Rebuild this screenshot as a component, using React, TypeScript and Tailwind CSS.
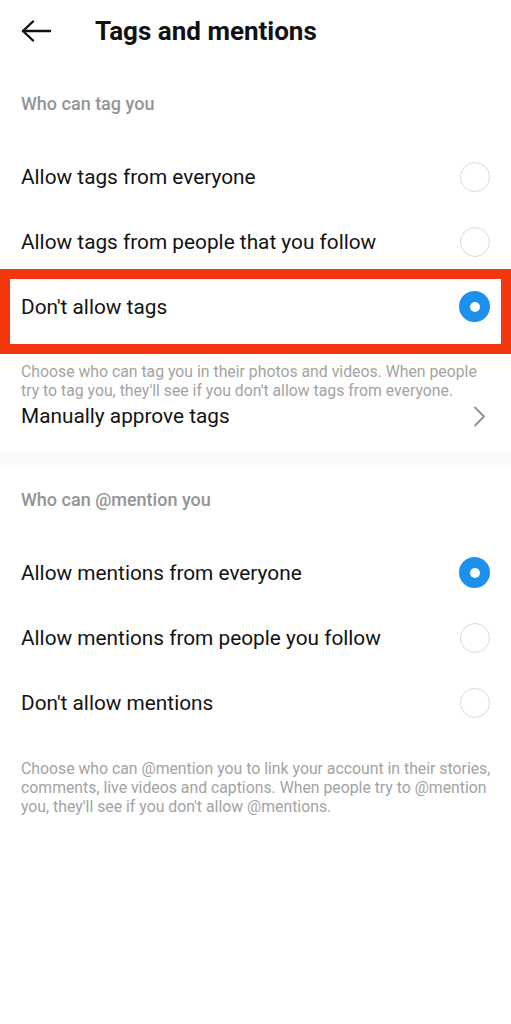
import React, { useState } from "react";

const font = { fontFamily: "Roboto, 'Noto Sans', Arial, sans-serif" };

type RowProps = {
  label: string;
  selected: boolean;
  onSelect: () => void;
  highlight?: boolean;
};

const Radio = ({ selected }: { selected: boolean }) =>
  selected ? (
    <div className="w-[31px] h-[31px] rounded-full bg-[#1c90ec] flex items-center justify-center">
      <div className="w-[10px] h-[10px] rounded-full bg-white" />
    </div>
  ) : (
    <div className="w-[30px] h-[30px] rounded-full border-[1.5px] border-[#d9d9d9]" />
  );

const OptionRow = ({ label, selected, onSelect, highlight }: RowProps) => (
  <button
    onClick={onSelect}
    className="relative w-full h-[65px] flex items-center justify-between pl-[21px] pr-[21px] text-left"
  >
    <span className="pt-[2px] text-[20.8px] text-[#131313]">{label}</span>
    <Radio selected={selected} />
    {highlight && (
      <div className="absolute left-0 right-0 -top-[5px] -bottom-[15px] border-[10px] border-[#f2360f] pointer-events-none" />
    )}
  </button>
);

const SectionLabel = ({ children, top }: { children: React.ReactNode; top: string }) => (
  <div className={`px-[21px] ${top} pb-[28px]`}>
    <div className="text-[18px] leading-[24px] font-medium text-[#949494]">{children}</div>
  </div>
);

export default function App() {
  const [tags, setTags] = useState(2);
  const [mentions, setMentions] = useState(0);

  const tagOptions = [
    "Allow tags from everyone",
    "Allow tags from people that you follow",
    "Don't allow tags",
  ];
  const mentionOptions = [
    "Allow mentions from everyone",
    "Allow mentions from people you follow",
    "Don't allow mentions",
  ];

  return (
    <div className="w-[511px] h-[1024px] bg-white overflow-hidden" style={font}>
      {/* Header */}
      <div className="h-[62px] flex items-center">
        <button className="w-[95px] h-full flex items-center pl-[21px]">
          <svg width="31" height="22" viewBox="0 0 31 22" fill="none" stroke="#111" strokeWidth="2.4" strokeLinecap="round" strokeLinejoin="round">
            <path d="M2 11h27" />
            <path d="M12 1.5L2 11l10 9.5" />
          </svg>
        </button>
        <h1 className="text-[26px] font-bold text-[#111]">Tags and mentions</h1>
      </div>

      {/* Who can tag you */}
      <SectionLabel top="pt-[30px]">Who can tag you</SectionLabel>
      {tagOptions.map((opt, i) => (
        <OptionRow
          key={opt}
          label={opt}
          selected={tags === i}
          onSelect={() => setTags(i)}
          highlight={i === 2}
        />
      ))}
      <p className="pl-[21px] pr-[15px] pt-[23px] text-[15.8px] leading-[19px] text-[#a3a3a3]">
        Choose who can tag you in their photos and videos. When people try to tag you, they'll see if you don't allow tags from everyone.
      </p>
      <button className="w-full h-[32px] flex items-center justify-between pl-[21px] pr-[25px]">
        <span className="pt-[2px] text-[20.8px] text-[#131313]">Manually approve tags</span>
        <svg width="13" height="21" viewBox="0 0 13 21" fill="none" stroke="#8e8e8e" strokeWidth="1.8" strokeLinecap="round" strokeLinejoin="round">
          <path d="M2 1.5l9 9-9 9" />
        </svg>
      </button>
      <div className="h-[20px]" />
      <div className="h-[13px] bg-[#fafafa]" />

      {/* Who can @mention you */}
      <SectionLabel top="pt-[23px]">Who can @mention you</SectionLabel>
      {mentionOptions.map((opt, i) => (
        <OptionRow key={opt} label={opt} selected={mentions === i} onSelect={() => setMentions(i)} />
      ))}
      <p className="pl-[21px] pr-[15px] pt-[24px] text-[15.8px] leading-[19px] text-[#a3a3a3]">
        Choose who can @mention you to link your account in their stories, comments, live videos and captions. When people try to @mention you, they'll see if you don't allow @mentions.
      </p>
    </div>
  );
}
